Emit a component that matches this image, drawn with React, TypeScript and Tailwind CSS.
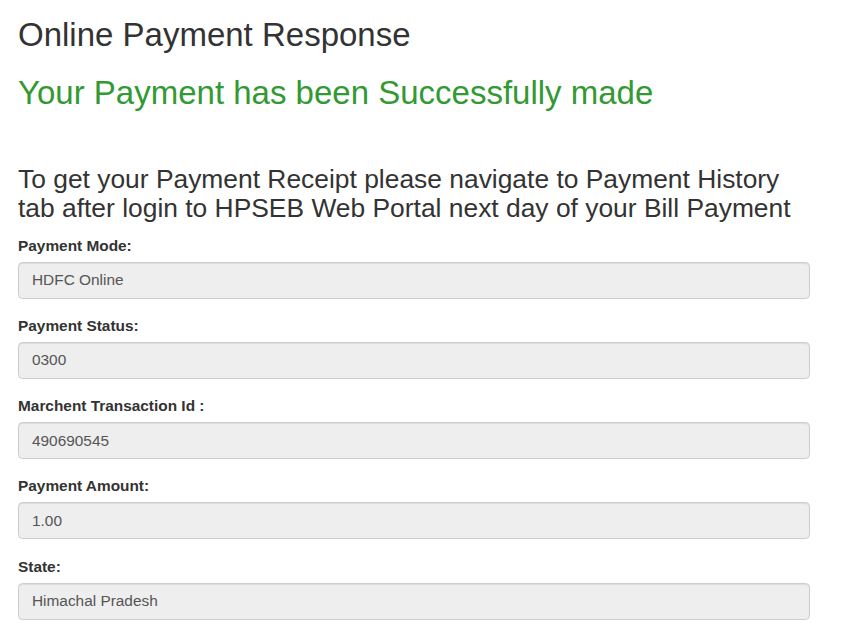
const fields = [
  { label: "Payment Mode:", value: "HDFC Online" },
  { label: "Payment Status:", value: "0300" },
  { label: "Marchent Transaction Id :", value: "490690545" },
  { label: "Payment Amount:", value: "1.00" },
  { label: "State:", value: "Himachal Pradesh" },
];

export default function App() {
  return (
    <div className="min-h-screen bg-white pl-[18px] pt-[17px] font-['Liberation_Sans',Arial,sans-serif] text-[#333]">
      <h2 className="text-[33px] leading-[1.1] font-normal">Online Payment Response</h2>
      <h2 className="mt-[21.7px] text-[33px] leading-[1.1] font-normal text-[#339933]">
        Your Payment has been Successfully made
      </h2>
      <h3 className="mt-[54px] w-[800px] text-[26.4px] leading-[29px] font-normal">
        To get your Payment Receipt please navigate to Payment History tab after login to HPSEB Web Portal next day of your Bill Payment
      </h3>
      <form className="mt-[11.4px] w-[792px]">
        {fields.map((f) => (
          <div key={f.label} className="mb-[16.25px]">
            <label className="block mb-[5px] text-[15.4px] leading-[22px] font-bold">{f.label}</label>
            <input
              readOnly
              disabled
              value={f.value}
              className="block w-full h-[37px] px-[13px] rounded-[4.5px] border border-[#ccc] bg-[#eee] text-[15.4px] text-[#555] shadow-[inset_0_1px_1px_rgba(0,0,0,0.075)] outline-none"
            />
          </div>
        ))}
      </form>
    </div>
  );
}
